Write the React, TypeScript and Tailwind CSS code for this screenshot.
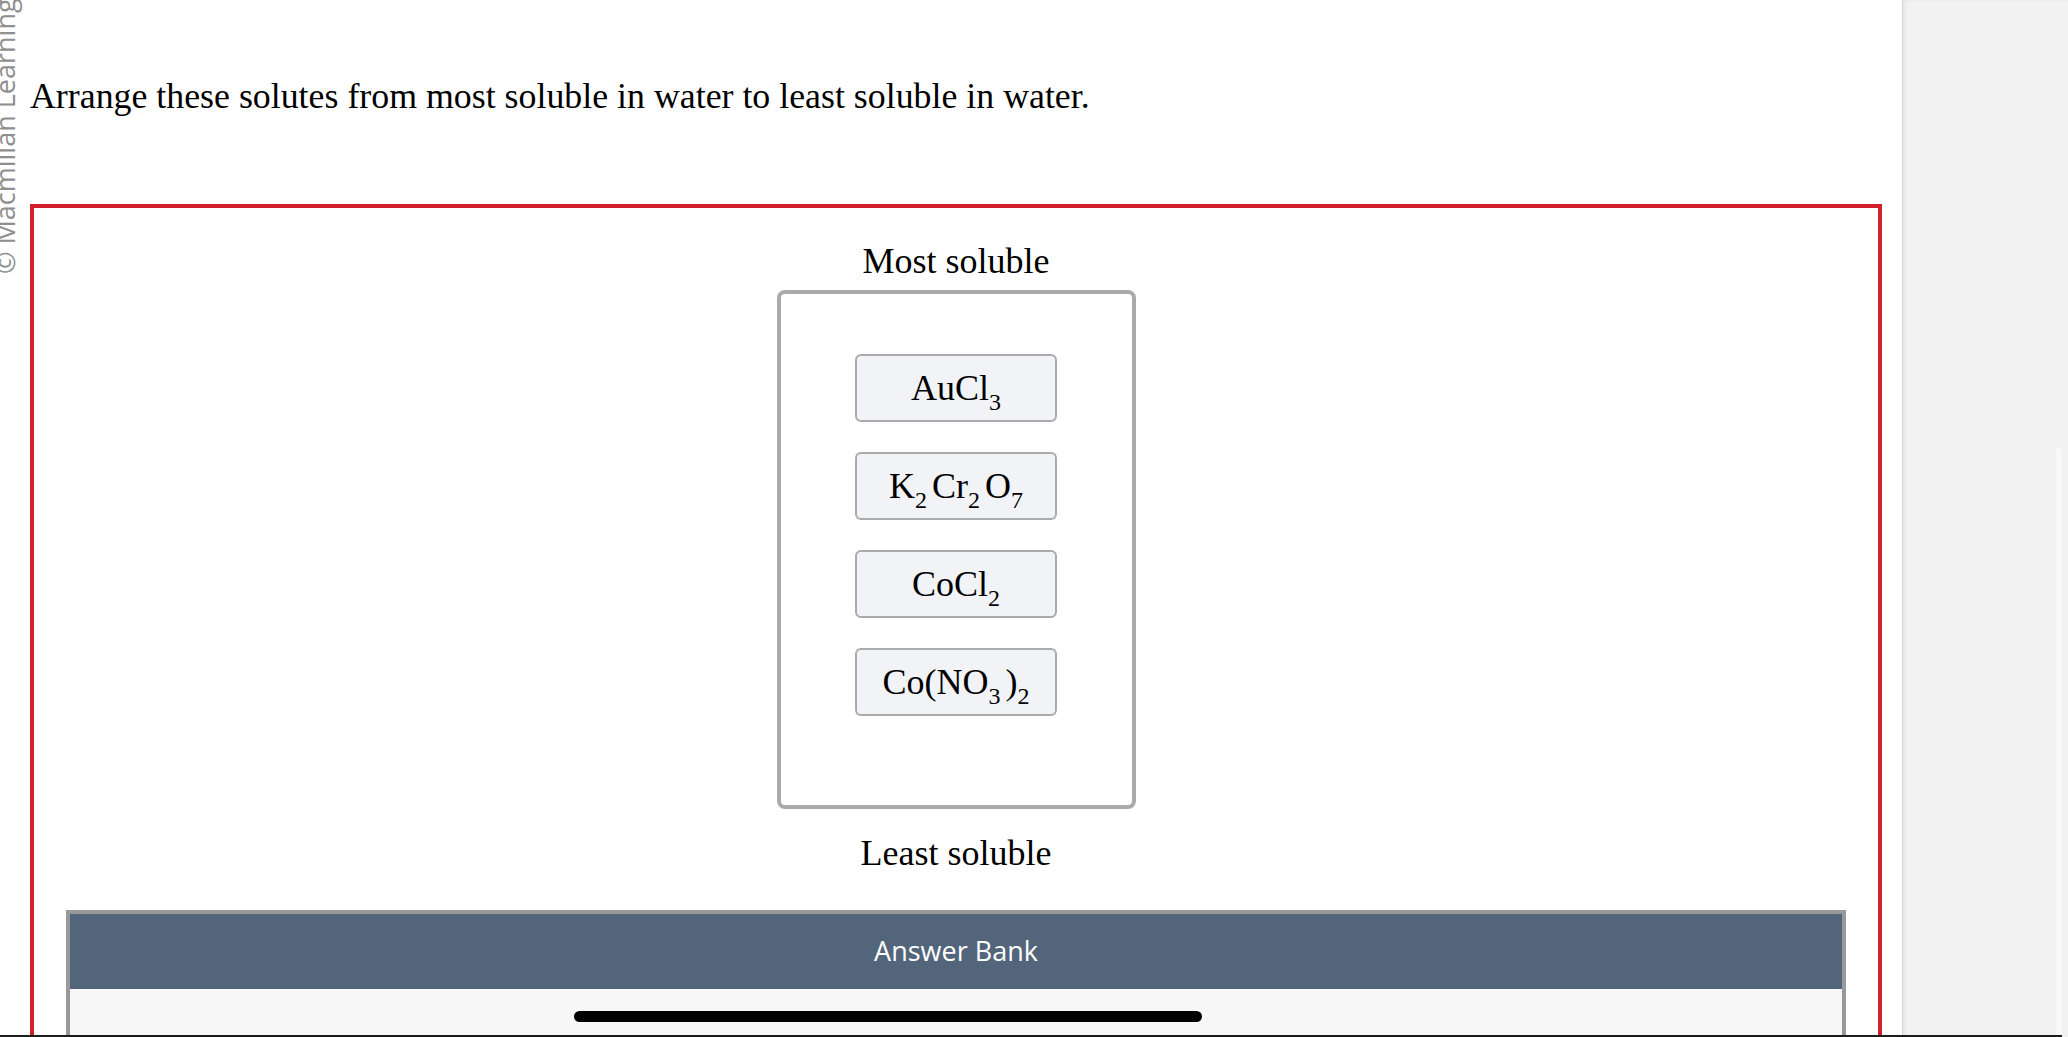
import React from "react";

const serif = { fontFamily: '"Liberation Serif", "Times New Roman", serif' };

function Sub({ children, gap = false }: { children: React.ReactNode; gap?: boolean }) {
  return (
    <span className={`text-[24px] leading-[0] align-[-10px] ${gap ? "mr-[5px]" : ""}`}>{children}</span>
  );
}

function Card({ children }: { children: React.ReactNode }) {
  return (
    <div
      className="w-[202px] h-[68px] rounded-[6px] border-2 border-[#ababab] bg-[#f2f3f7] flex items-center justify-center text-[36px] leading-[40px] text-black"
      style={serif}
    >
      <span className="pb-[1px]">{children}</span>
    </div>
  );
}

export default function App() {
  return (
    <div className="relative w-[2068px] h-[1037px] overflow-hidden bg-white flex">
      {/* Main column */}
      <div className="relative w-[1902px] shrink-0 bg-white">
        {/* Watermark */}
        <div
          className="absolute left-[-9px] top-[274px] origin-top-left -rotate-90 whitespace-nowrap text-[27px] leading-[27px] text-[#8f8f8f]"
          style={{ fontFamily: '"Open Sans", "Noto Sans", sans-serif' }}
        >
          © Macmillan Learning
        </div>

        <p className="pl-[30px] pt-[76px] text-[35.85px] leading-[40px] text-black" style={serif}>
          Arrange these solutes from most soluble in water to least soluble in water.
        </p>

        <div className="ml-[30px] mt-[88px] w-[1852px] border-4 border-[#d11f2b] pb-[200px]">
          <div className="flex flex-col items-center">
            <div className="mt-[33px] text-[36px] leading-[40px] text-black" style={serif}>
              Most soluble
            </div>
            <div className="mt-[9px] w-[359px] h-[519px] rounded-[8px] border-4 border-[#aaaaaa] flex flex-col items-center pt-[60px] gap-[30px]">
              <Card>
                AuCl<Sub>3</Sub>
              </Card>
              <Card>
                K<Sub gap>2</Sub>Cr<Sub gap>2</Sub>O<Sub>7</Sub>
              </Card>
              <Card>
                CoCl<Sub>2</Sub>
              </Card>
              <Card>
                Co(NO<Sub gap>3</Sub>)<Sub>2</Sub>
              </Card>
            </div>
            <div className="mt-[24px] text-[36px] leading-[40px] text-black" style={serif}>
              Least soluble
            </div>
          </div>

          <div className="mx-[32px] mt-[37px] border-x-4 border-t-4 border-[#999999]">
            <div
              className="h-[75px] bg-[#52657b] flex items-center justify-center text-white text-[27px]"
              style={{ fontFamily: '"Open Sans", "Noto Sans", sans-serif' }}
            >
              Answer Bank
            </div>
            <div className="h-[300px] bg-[#f7f7f7]" />
          </div>
        </div>
      </div>

      {/* Right side panel */}
      <div className="relative flex-1 bg-[#f2f2f2] border-l border-[#d8d8d8] shadow-[inset_2px_0_3px_rgba(0,0,0,0.06)]">
        <div className="absolute right-[6px] top-[448px] bottom-0 w-[6px] rounded-t-full bg-[#f8f8f8]" />
      </div>

      {/* Home indicator bar */}
      <div className="absolute left-[574px] top-[1011px] w-[628px] h-[11px] rounded-full bg-black" />

      {/* Bottom edge line */}
      <div className="absolute left-0 right-[6px] bottom-0 h-[2px] bg-[#1c1c1c]" />
    </div>
  );
}
